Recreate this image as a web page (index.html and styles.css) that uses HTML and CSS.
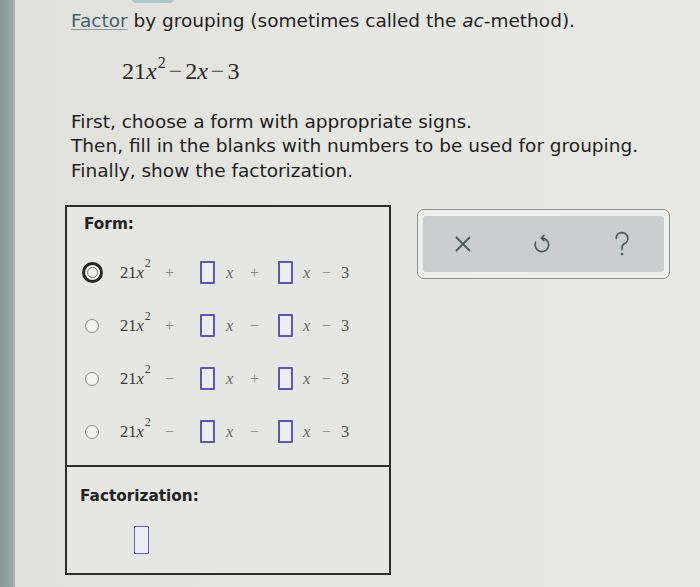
FILE: index.html
```html
<!DOCTYPE html>
<html lang="en">
<head>
<meta charset="utf-8">
<title>Factor by grouping</title>
<link rel="stylesheet" href="styles.css">
</head>
<body>
<div class="page">
  <div class="edge"></div>
  <main class="content">
    <div class="tab"></div>
    <p class="title"><span class="link">Factor</span> by grouping (sometimes called the <i>ac</i>-method).</p>
    <div class="problem">21<i>x</i><sup>2</sup><span class="mop">−</span>2<i>x</i><span class="mop">−</span>3</div>
    <p class="instr">First, choose a form with appropriate signs.<br>Then, fill in the blanks with numbers to be used for grouping.<br>Finally, show the factorization.</p>
    <div class="work">
      <div class="panel">
        <section class="form-sec">
          <div class="label">Form:</div>
          <div class="row">
            <span class="radio sel"><span class="dot"></span></span>
            <span class="lead">21<i>x</i><sup>2</sup></span>
            <span class="op">+</span>
            <span class="cell-b"><span class="blank"></span></span>
            <span class="var"><i>x</i></span>
            <span class="op2">+</span>
            <span class="cell-b2"><span class="blank"></span></span>
            <span class="var2"><i>x</i></span>
            <span class="op3">−</span>
            <span class="num">3</span>
          </div>
          <div class="row">
            <span class="radio"></span>
            <span class="lead">21<i>x</i><sup>2</sup></span>
            <span class="op">+</span>
            <span class="cell-b"><span class="blank"></span></span>
            <span class="var"><i>x</i></span>
            <span class="op2">−</span>
            <span class="cell-b2"><span class="blank"></span></span>
            <span class="var2"><i>x</i></span>
            <span class="op3">−</span>
            <span class="num">3</span>
          </div>
          <div class="row">
            <span class="radio"></span>
            <span class="lead">21<i>x</i><sup>2</sup></span>
            <span class="op">−</span>
            <span class="cell-b"><span class="blank"></span></span>
            <span class="var"><i>x</i></span>
            <span class="op2">+</span>
            <span class="cell-b2"><span class="blank"></span></span>
            <span class="var2"><i>x</i></span>
            <span class="op3">−</span>
            <span class="num">3</span>
          </div>
          <div class="row">
            <span class="radio"></span>
            <span class="lead">21<i>x</i><sup>2</sup></span>
            <span class="op">−</span>
            <span class="cell-b"><span class="blank"></span></span>
            <span class="var"><i>x</i></span>
            <span class="op2">−</span>
            <span class="cell-b2"><span class="blank"></span></span>
            <span class="var2"><i>x</i></span>
            <span class="op3">−</span>
            <span class="num">3</span>
          </div>
        </section>
        <section class="fact-sec">
          <div class="label">Factorization:</div>
          <div class="blank big"></div>
        </section>
      </div>
      <div class="toolbar">
        <div class="tools">
          <span class="tool" title="Clear">
            <svg width="18" height="18" viewBox="0 0 18 18"><path d="M2.5 2.5 L15.5 15.5 M15.5 2.5 L2.5 15.5" stroke="#4b5859" stroke-width="1.8" fill="none" stroke-linecap="round"/></svg>
          </span>
          <span class="tool" title="Undo">
            <svg width="20" height="22" viewBox="0 0 20 22"><path d="M9.5 5 A6.8 6.8 0 1 1 3.6 9.2" stroke="#4b5859" stroke-width="1.7" fill="none" stroke-linecap="round"/><path d="M12 2.3 L9.3 5 L12 7.7" stroke="#4b5859" stroke-width="1.7" fill="none" stroke-linecap="round" stroke-linejoin="round"/></svg>
          </span>
          <span class="tool" title="Help">
            <svg width="18" height="26" viewBox="0 0 18 26"><path d="M3.2 7.5 A5.8 5.8 0 1 1 11.5 12.6 Q9 14 9 17 V18.5" stroke="#4b5859" stroke-width="1.7" fill="none" stroke-linecap="round"/><circle cx="9" cy="23" r="1.3" fill="#4b5859"/></svg>
          </span>
        </div>
      </div>
    </div>
  </main>
</div>
</body>
</html>
```
FILE: styles.css
```css
html, body {
  margin: 0;
  padding: 0;
}
body {
  background: #e4e4e0;
  width: 700px;
  height: 587px;
  overflow: hidden;
}
.page {
  display: flex;
  height: 587px;
  position: relative;
}
.edge {
  width: 15px;
  flex: none;
  background: linear-gradient(90deg, #8a9797 0%, #97a4a4 70%, #a9b3b1 100%);
}
.content {
  flex: 1;
  padding: 9px 0 0 50px;
  background: linear-gradient(90deg, #e0e0dc 0%, #e5e5e1 40%, #e8e8e5 100%);
  font-family: "DejaVu Sans", Verdana, sans-serif;
  color: #1f1f1f;
}
.tab {
  position: absolute;
  left: 132px;
  top: -6px;
  width: 42px;
  height: 9px;
  border-radius: 5px;
  background: #aac7c4;
}
.title {
  margin: 0 0 0 6px;
  font-size: 18.5px;
  line-height: 24.5px;
}
.link {
  color: #46606c;
  text-decoration: underline;
  text-decoration-color: #8a9ea6;
  text-underline-offset: 2px;
}
.problem {
  margin: 23px 0 0 57px;
  font-family: "Liberation Serif", "Times New Roman", serif;
  font-size: 24px;
  line-height: 28px;
  color: #2a2a2a;
}
.problem sup {
  font-size: 16px;
  vertical-align: 0;
  position: relative;
  top: -11px;
  margin-left: 1px;
}
.mop {
  margin: 0 3px;
  color: #444;
}
.instr {
  margin: 22px 0 0 6px;
  font-size: 18.5px;
  line-height: 24.5px;
}
.work {
  display: flex;
  align-items: flex-start;
  margin-top: 22px;
}
.panel {
  width: 322px;
  border: 2px solid #2c2c2c;
  background: #e6e6e2;
}
.label {
  font-weight: bold;
  font-size: 15.3px;
  line-height: 20px;
  color: #222;
}
.form-sec {
  padding: 7px 0 7px 0;
  border-bottom: 2px solid #2f2f2f;
}
.form-sec .label {
  padding-left: 17px;
  margin-bottom: 12px;
}
.row {
  display: grid;
  grid-template-columns: 50px 46px 32px 27px 24px 28px 26px 20px 18px auto;
  align-items: center;
  height: 53px;
  font-family: "Liberation Serif", "Times New Roman", serif;
  font-size: 16.5px;
  color: #3a3a3a;
}
.radio {
  justify-self: center;
  width: 14px;
  height: 14px;
  box-sizing: border-box;
  border: 1.5px solid #8a8a8a;
  border-radius: 50%;
  background: #f2f2f0;
  display: flex;
  align-items: center;
  justify-content: center;
}
.radio.sel {
  width: 21px;
  height: 21px;
  border: 3px solid #262626;
  background: #f0f0ee;
}
.radio .dot {
  width: 11px;
  height: 11px;
  box-sizing: border-box;
  border: 1.5px solid #777;
  border-radius: 50%;
}
.lead {
  padding-left: 3px;
  white-space: nowrap;
}
.lead sup, .row sup {
  font-size: 12px;
  vertical-align: 0;
  position: relative;
  top: -11px;
  margin-left: 1px;
  color: #444;
}
.op, .op2, .op3 {
  color: #8a8a8a;
  font-size: 16px;
}
.op { padding-left: 2px; }
.op2 { padding-left: 4px; }
.op3 { padding-left: 2px; }
.cell-b { padding-left: 5px; display: flex; }
.cell-b2 { padding-left: 4px; display: flex; }
.var { padding-left: 4px; color: #666; }
.var2 { padding-left: 3px; color: #666; }
.num { padding-left: 3px; color: #555; }
.blank {
  width: 15px;
  height: 23px;
  box-sizing: border-box;
  border: 2px solid #5e55b6;
  border-radius: 1px;
  background: #ececf2;
}
.fact-sec {
  padding: 19px 0 19px 0;
}
.fact-sec .label {
  padding-left: 13px;
}
.blank.big {
  margin: 20px 0 0 67px;
  width: 15px;
  height: 28px;
  border-width: 1.5px;
  border-color: #6a62c0;
}
.toolbar {
  margin: 4px 0 0 26px;
  width: 253px;
  height: 70px;
  box-sizing: border-box;
  border: 1px solid #8c9192;
  border-radius: 7px;
  background: #eff0ee;
  padding: 6px 5px;
}
.tools {
  height: 100%;
  border-radius: 3px;
  background: #cacecf;
  display: grid;
  grid-template-columns: 1fr 1fr 1fr;
  align-items: center;
  justify-items: center;
  padding: 0 2px 0 0;
}
.tool {
  display: flex;
  align-items: center;
  justify-content: center;
}
.tool svg { display: block; }
```
